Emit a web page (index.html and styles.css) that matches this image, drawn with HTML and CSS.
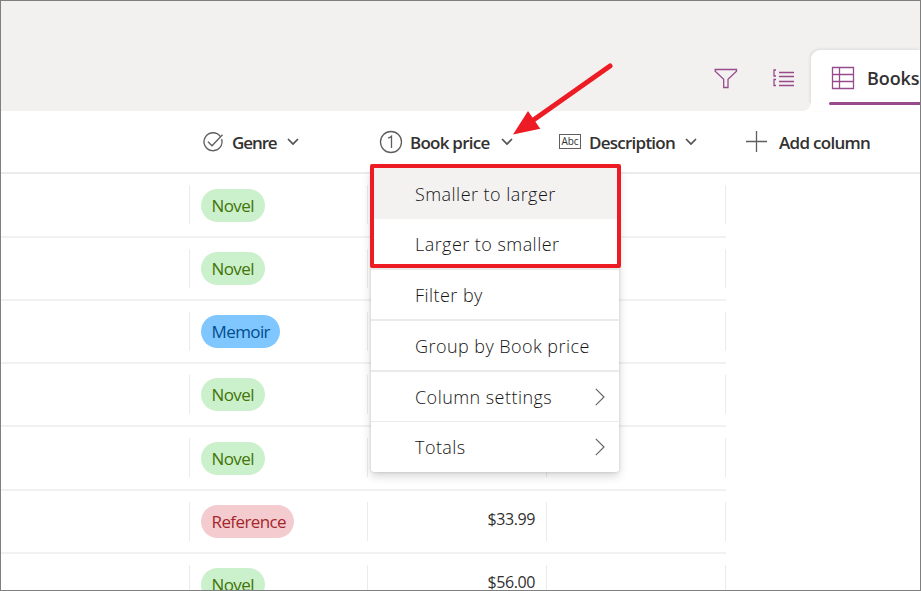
FILE: index.html
```html
<!DOCTYPE html>
<html lang="en">
<head>
<meta charset="utf-8">
<title>Books</title>
<link rel="stylesheet" href="styles.css">
</head>
<body>
<div class="app">
  <header class="topbar">
    <svg class="filter" width="24" height="22" viewBox="0 0 24 22"><path d="M1.200 1.500h21.300v1.700L14 11.400v8.100H9.700v-8.100L1.200 3.200z"/></svg>
    <svg class="group" width="24" height="20" viewBox="0 0 24 20"><path d="M4 2H2v6h2M4 11.500H2v6h2M7 4.500h15M7 8.500h15M7 13.500h15M7 17.500h15"/></svg>
    <div class="tab">
      <svg class="grid-icon" width="24" height="24" viewBox="0 0 24 24"><path d="M1.500 1.500h21v21h-21zM8.500 1.500v21M1.500 8.500h21M1.500 15.500h21"/></svg>
      <span class="tab-label">Books</span>
    </div>
  </header>
  <div class="columns">
    <div class="column genre">
      <svg width="22" height="22" viewBox="0 0 22 22"><path d="M18.200 5.300A9 9 0 1 0 19.600 8M6 10.800l4 4L20.500 3.800"/></svg>
      <span class="name">Genre</span>
      <svg class="chev" width="12" height="8" viewBox="0 0 12 8"><path d="M1 1l5 5 5-5"/></svg>
    </div>
    <div class="column price">
      <svg width="24" height="24" viewBox="0 0 24 24"><circle cx="12" cy="12" r="10.500"/><path d="M9 8.200c1.500-.4 2.600-1 3.500-1.900V18"/></svg>
      <span class="name">Book price</span>
      <svg class="chev" width="12" height="8" viewBox="0 0 12 8"><path d="M1 1l5 5 5-5"/></svg>
    </div>
    <div class="column desc">
      <span class="abc">Abc</span>
      <span class="name">Description</span>
      <svg class="chev" width="12" height="8" viewBox="0 0 12 8"><path d="M1 1l5 5 5-5"/></svg>
    </div>
    <div class="column add">
      <svg width="22" height="22" viewBox="0 0 22 22"><path d="M10.500 0v21M0 10.500h21"/></svg>
      <span class="name">Add column</span>
    </div>
  </div>
  <main class="rows">
    <div class="row tall"><div></div><div class="cell"><span class="pill novel">Novel</span></div><div class="cell"></div><div class="cell last"></div></div>
    <div class="row"><div></div><div class="cell"><span class="pill novel">Novel</span></div><div class="cell"></div><div class="cell last"></div></div>
    <div class="row"><div></div><div class="cell"><span class="pill memoir">Memoir</span></div><div class="cell"></div><div class="cell last"></div></div>
    <div class="row"><div></div><div class="cell"><span class="pill novel">Novel</span></div><div class="cell"></div><div class="cell last"></div></div>
    <div class="row tall"><div></div><div class="cell"><span class="pill novel">Novel</span></div><div class="cell"></div><div class="cell last"></div></div>
    <div class="row"><div></div><div class="cell"><span class="pill reference">Reference</span></div><div class="cell amount"><span>$33.99</span></div><div class="cell last"></div></div>
    <div class="row"><div></div><div class="cell"><span class="pill novel">Novel</span></div><div class="cell amount"><span>$56.00</span></div><div class="cell last"></div></div>
  </main>
  <nav class="menu">
    <div class="item active"><span>Smaller to larger</span></div>
    <div class="item second"><span>Larger to smaller</span></div>
    <div class="item ruled"><span>Filter by</span></div>
    <div class="item ruled"><span>Group by Book price</span></div>
    <div class="item thin"><span>Column settings</span><svg width="10" height="18" viewBox="0 0 10 18"><path d="M.8.800l8.200 8.200-8.200 8.200"/></svg></div>
    <div class="item"><span>Totals</span><svg width="10" height="18" viewBox="0 0 10 18"><path d="M.8.800l8.200 8.200-8.200 8.200"/></svg></div>
  </nav>
  <div class="highlight"></div>
  <svg class="arrow" width="110" height="80" viewBox="510 60 110 80"><path class="shaft" d="M610 66L532 121"/><path class="head" d="M513 134.500l15-23.500 12.300 17.800z"/></svg>
</div>
</body>
</html>
```
FILE: styles.css
```css
* { box-sizing: border-box; }
body { margin: 0; background: #fff; color: #323130; font-family: "Open Sans", "Noto Sans", sans-serif; }
svg { display: block; flex: none; fill: none; }
.app { position: relative; width: 921px; height: 591px; border: 1px solid #7f7f7f; overflow: hidden; }
.topbar { height: 110px; background: #f3f1f0; display: flex; justify-content: flex-end; align-items: flex-start; }
.topbar svg { stroke: #974b8d; stroke-width: 1.3; }
.filter { margin: 67px 34px 0 0; }
.group { margin: 67px 15px 0 0; }
.tab { position: relative; width: 109px; height: 61px; margin-top: 49px; padding: 16px 0 0 20px; background: #fff; border-radius: 9px 0 0 0; box-shadow: -1px -1px 3px rgba(0,0,0,.09); display: flex; align-items: flex-start; gap: 12px; }
.tab::before { content: ""; position: absolute; left: -8px; bottom: 0; width: 8px; height: 8px; background: radial-gradient(circle at 0 0, #f3f1f0 7.500px, #fff 8px); }
.tab::after { content: ""; position: absolute; left: 18px; right: 0; bottom: 6px; height: 3px; background: #974b8d; border-radius: 2px 0 0 2px; }
.tab-label { font-size: 18px; line-height: 24px; font-weight: 600; letter-spacing: -.1px; white-space: nowrap; }
.columns { height: 63px; border-bottom: 2px solid #ebebeb; display: flex; }
.column { height: 61px; display: flex; align-items: center; }
.column svg { stroke: #605e5c; stroke-width: 1.300; }
.column .chev { stroke: #505050; stroke-width: 1.700; }
.name { font-size: 17px; line-height: 24px; font-weight: 600; white-space: nowrap; padding-top: 2px; }
.genre { padding-left: 201px; width: 378px; }
.genre .name { margin-left: 8px; width: 55px; letter-spacing: -1.100px; }
.price { width: 180px; }
.price .name { margin-left: 7px; width: 91px; letter-spacing: -.75px; }
.desc { width: 187px; }
.abc { width: 22px; height: 15px; border: 1px solid #605e5c; font-size: 10px; line-height: 13px; text-align: center; }
.desc .name { margin-left: 8px; width: 96px; letter-spacing: -.75px; }
.add .name { margin-left: 11px; letter-spacing: -.7px; }
.rows { width: 725px; }
.row { height: 63px; border-bottom: 2px solid #f1f1f1; display: grid; grid-template-columns: 188px 178px 179px 180px; padding-top: 11px; }
.row.tall { height: 64px; }
.cell { height: 39px; border-left: 1px solid #edebe9; padding: 3px 0 0 11px; }
.tall .cell { padding-top: 4px; }
.last { border-right: 1px solid #edebe9; }
.pill { display: block; height: 33px; border-radius: 17px; font-size: 17px; line-height: 34px; padding-left: 10.500px; letter-spacing: -.6px; }
.novel { width: 64px; background: #caf0cc; color: #437406; }
.memoir { width: 79px; background: #80c6ff; color: #004e8c; }
.reference { width: 93px; background: #f4cccf; color: #a4262c; }
.amount { text-align: right; padding: 5px 11px 0 0; font-size: 16px; line-height: 24px; letter-spacing: -.4px; }
.menu { position: absolute; left: 370px; top: 167px; width: 248px; height: 304px; background: #fff; border-radius: 3px; box-shadow: 0 4px 10px rgba(0,0,0,.17), 0 0 3px rgba(0,0,0,.15); }
.item { height: 50px; padding: 0 14px 0 44px; display: flex; align-items: center; justify-content: space-between; font-size: 18px; font-weight: 300; letter-spacing: .45px; color: #151515; white-space: nowrap; }
.item svg { stroke: #666; stroke-width: 1.200; }
.active { background: #f3f2f1; height: 51px; }
.second, .ruled { height: 51px; border-bottom: 2px solid #eaeaea; }
.thin { border-bottom: 1px solid #eaeaea; }
.highlight { position: absolute; left: 369px; top: 163px; width: 251px; height: 104px; border: 4px solid #ed1c24; border-radius: 2px; }
.arrow { position: absolute; left: 509px; top: 59px; }
.shaft { stroke: #ed1c24; stroke-width: 5; stroke-linecap: round; }
.head { fill: #ed1c24; }
```
